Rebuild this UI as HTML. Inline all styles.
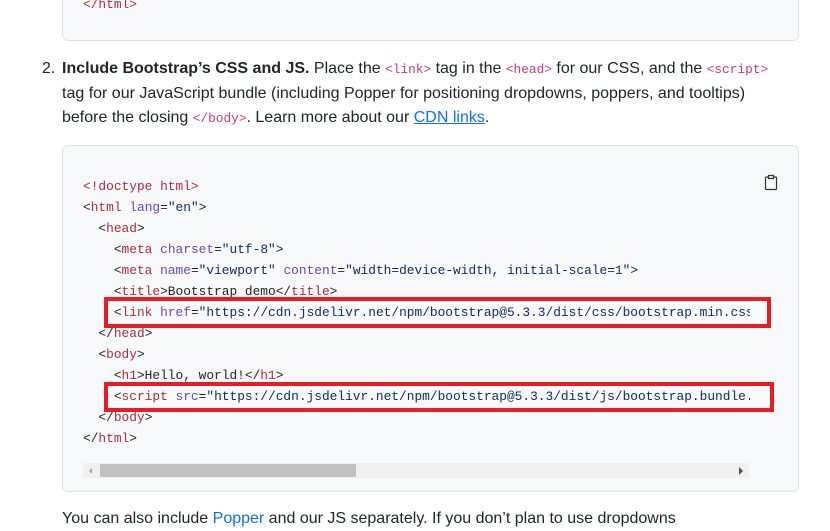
<!DOCTYPE html>
<html><head><meta charset="utf-8"><style>
body{margin:0;width:830px;height:515px;overflow:hidden;background:#fff;font-family:"Liberation Sans",sans-serif;color:#212529}
.blk{position:absolute;left:62px;width:737px;background:#f8f9fa;border:1px solid #dee2e6;border-radius:6px;box-sizing:border-box}
pre{margin:0;font-family:"Liberation Mono",monospace;font-size:12.85px;line-height:21px;color:#212529}
.t{color:#b02a37}.a{color:#6f42c1}.s{color:#0b2e6a}
.p{position:absolute;left:62px;top:57px;width:720px;font-size:16px;line-height:24px}
.p code{font-family:"Liberation Mono",monospace;font-size:12.8px;color:#d63384}
.num{position:absolute;left:42px;top:57px;font-size:16px;line-height:24px}
.red{position:absolute;border:4px solid #e81c25;box-sizing:border-box}
</style></head><body>
<div class="blk" style="top:-20px;height:61px"><pre style="position:absolute;left:20px;top:13px"><span class="t">&lt;/html&gt;</span></pre></div>
<div class="num">2.</div>
<div class="p"><b>Include Bootstrap’s CSS and JS.</b> Place the <code>&lt;link&gt;</code> tag in the <code>&lt;head&gt;</code> for our CSS, and the <code>&lt;script&gt;</code> tag for our JavaScript bundle (including Popper for positioning dropdowns, poppers, and tooltips) before the closing <code>&lt;/body&gt;</code>. Learn more about our <a style="color:#0d6efd;text-decoration:underline">CDN links</a>.</div>
<div class="blk" style="top:145px;height:347px;overflow:hidden">
<pre style="position:absolute;left:20px;top:30px;white-space:pre"><span class="t">&lt;!doctype html&gt;</span>
&lt;<span class="t">html</span> <span class="a">lang</span>=<span class="s">"en"</span>&gt;
  &lt;<span class="t">head</span>&gt;
    &lt;<span class="t">meta</span> <span class="a">charset</span>=<span class="s">"utf-8"</span>&gt;
    &lt;<span class="t">meta</span> <span class="a">name</span>=<span class="s">"viewport"</span> <span class="a">content</span>=<span class="s">"width=device-width, initial-scale=1"</span>&gt;
    &lt;<span class="t">title</span>&gt;Bootstrap demo&lt;/<span class="t">title</span>&gt;
    &lt;<span class="t">link</span> <span class="a">href</span>=<span class="s">"https://cdn.jsdelivr.net/npm/bootstrap@5.3.3/dist/css/bootstrap.min.css</span>
  &lt;/<span class="t">head</span>&gt;
  &lt;<span class="t">body</span>&gt;
    &lt;<span class="t">h1</span>&gt;Hello, world!&lt;/<span class="t">h1</span>&gt;
    &lt;<span class="t">script</span> <span class="a">src</span>=<span class="s">"https://cdn.jsdelivr.net/npm/bootstrap@5.3.3/dist/js/bootstrap.bundle.</span>
  &lt;/<span class="t">body</span>&gt;
&lt;/<span class="t">html</span>&gt;</pre>
<div style="position:absolute;left:687px;top:0;width:50px;height:300px;background:#f8f9fa"></div>
<svg style="position:absolute;left:701px;top:28px" width="14" height="17" viewBox="0 0 14 17"><path d="M4 3H2.5Q1.5 3 1.5 4V14.5Q1.5 15.5 2.5 15.5H11.5Q12.5 15.5 12.5 14.5V4Q12.5 3 11.5 3H10M4.5 1.5H9.5V4.5H4.5Z" fill="none" stroke="#333" stroke-width="1.2"/></svg>
<div style="position:absolute;left:20px;top:317px;width:666px;height:15px;background:#f0f0f0"></div>
<div style="position:absolute;left:37px;top:318px;width:256px;height:13px;background:#c1c1c1"></div>
<div style="position:absolute;left:26px;top:322px;width:0;height:0;border:3px solid transparent;border-right:3px solid #a3a3a3;border-left:0"></div>
<div style="position:absolute;left:676px;top:321px;width:0;height:0;border:4px solid transparent;border-left:4px solid #505050;border-right:0"></div>
</div>
<div class="red" style="left:104px;top:297px;width:667px;height:31px"></div>
<div class="red" style="left:104px;top:382px;width:670px;height:30px"></div>
<div style="position:absolute;left:62px;top:507px;font-size:16px;line-height:24px;color:#212529">You can also include <span style="color:#0d6efd">Popper</span> and our JS separately. If you don’t plan to use dropdowns</div>
</body></html>
